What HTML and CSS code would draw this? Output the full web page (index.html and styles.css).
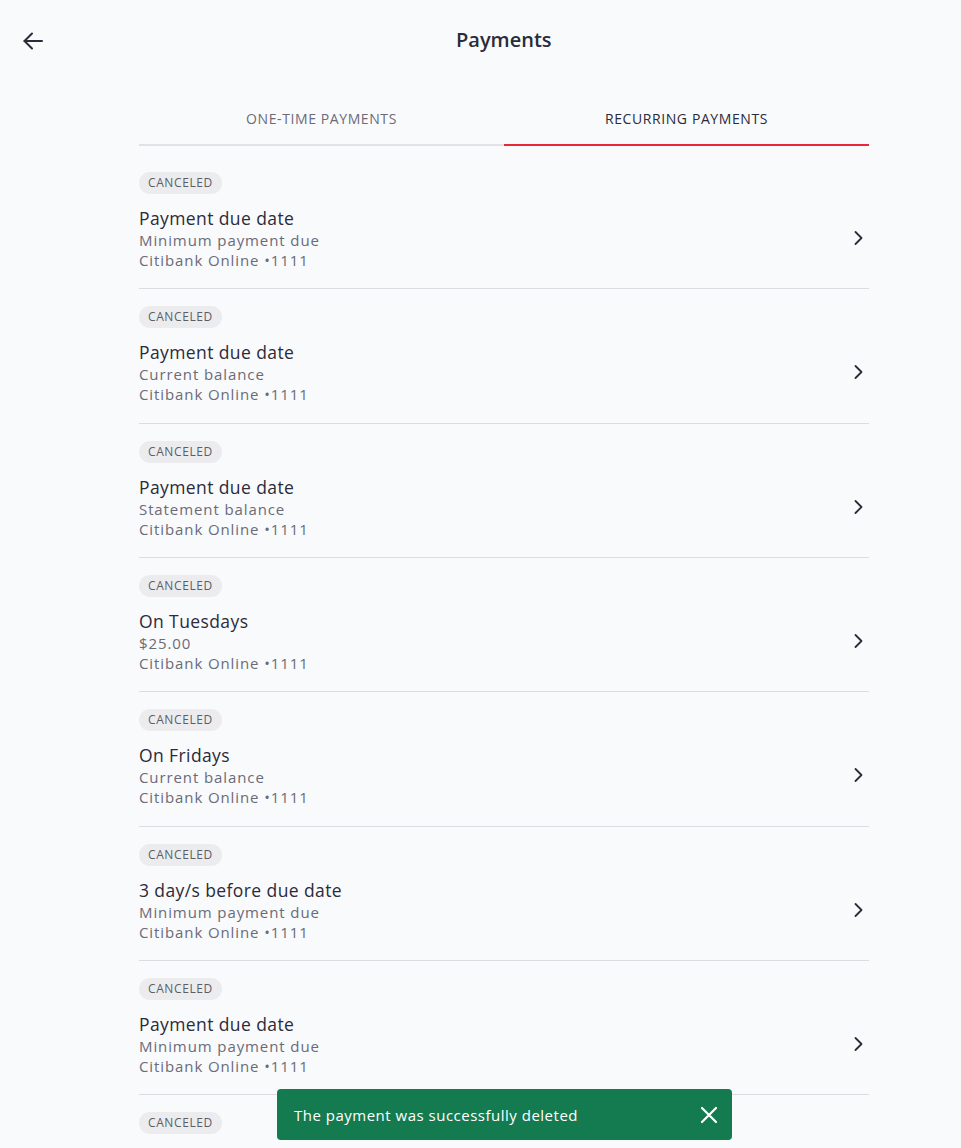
FILE: index.html
```html
<!DOCTYPE html>
<html>
<head>
  <title>Payments</title>
  <link rel="stylesheet" href="styles.css">
</head>
<body>
  <!-- Header -->
  <header class="topbar">
    <a class="back" href="#">
      <svg width="24" height="24" viewBox="0 0 24 24" fill="none" stroke="#2b2b3a" stroke-width="2" stroke-linecap="round" stroke-linejoin="round">
        <path d="M21 12H3.5"/>
        <path d="M11 4.5L3.5 12l7.5 7.5"/>
      </svg>
    </a>
    <h1 class="title">Payments</h1>
  </header>

  <main class="content">
    <!-- Tabs -->
    <div class="tabs">
      <div class="tab">ONE-TIME PAYMENTS</div>
      <div class="tab active">RECURRING PAYMENTS</div>
    </div>

    <!-- List -->
    <div class="list" id="list"></div>
  </main>

  <!-- Toast -->
  <div class="toast">
    <span>The payment was successfully deleted</span>
    <svg class="toast-close" width="18" height="18" viewBox="0 0 18 18" stroke="#fff" stroke-width="2.2" stroke-linecap="round">
      <path d="M2 2l14 14M16 2L2 16"/>
    </svg>
  </div>

  <script>
    const payments = [
      { title: "Payment due date", amount: "Minimum payment due" },
      { title: "Payment due date", amount: "Current balance" },
      { title: "Payment due date", amount: "Statement balance" },
      { title: "On Tuesdays", amount: "$25.00" },
      { title: "On Fridays", amount: "Current balance" },
      { title: "3 day/s before due date", amount: "Minimum payment due" },
      { title: "Payment due date", amount: "Minimum payment due" }
    ];

    const chevron = `
      <svg class="chevron" width="10" height="16" viewBox="0 0 10 16" fill="none" stroke="#2b2b3a" stroke-width="1.8" stroke-linecap="round" stroke-linejoin="round">
        <path d="M2.5 2l6 6-6 6"/>
      </svg>`;

    const list = document.getElementById("list");
    for (const p of payments) {
      const row = document.createElement("div");
      row.className = "item";
      row.innerHTML = `
        <div class="item-body">
          <span class="badge">CANCELED</span>
          <div class="item-title">${p.title}</div>
          <div class="item-sub">${p.amount}</div>
          <div class="item-sub">Citibank Online •1111</div>
        </div>
        ${chevron}
      `;
      list.appendChild(row);
    }

    // last row is only peeking in under the toast
    const last = document.createElement("div");
    last.className = "item item-peek";
    last.innerHTML = `<div class="item-body"><span class="badge">CANCELED</span></div>`;
    list.appendChild(last);
  </script>
</body>
</html>
```

FILE: styles.css
```css
/* General */
body {
    margin: 0;
    font-family: "Open Sans", Arial, sans-serif;
    background-color: #f9fafc;
    color: #2b2b3a;
    height: 1148px;
    overflow: hidden;
}

/* Header */
.topbar {
    display: flex;
    align-items: center;
    height: 80px;
}

.back {
    display: flex;
    margin-left: 21px;
    margin-top: 1px;
}

.title {
    margin: 0 0 0 411px;
    font-size: 20px;
    font-weight: 600;
    color: #2b2b3a;
    position: relative;
    top: -1px;
}

/* Content column */
.content {
    width: 730px;
    margin-left: 139px;
}

/* Tabs */
.tabs {
    display: flex;
    margin-top: 12px;
}

.tab {
    flex: 1;
    text-align: center;
    font-size: 14px;
    letter-spacing: 0.6px;
    color: #6b6b78;
    padding: 17px 0 15px;
    line-height: 20px;
    border-bottom: 2px solid #e2e2e6;
}

.tab.active {
    color: #2b2b3a;
    border-bottom: 2px solid #e8283a;
}

/* List */
.list {
    padding-top: 9px;
}

.item {
    display: flex;
    align-items: flex-start;
    padding: 17px 0 18.35px;
    border-bottom: 1px solid #dcdce0;
}

.item-peek {
    border-bottom: none;
}

.item-body {
    flex: 1;
    display: flex;
    flex-direction: column;
    align-items: flex-start;
}

.badge {
    height: 22px;
    line-height: 22px;
    padding: 0 9px;
    border-radius: 11px;
    background-color: #ececef;
    color: #5d5d68;
    font-size: 12px;
    font-weight: 500;
    letter-spacing: 0.6px;
}

.item-title {
    margin-top: 12px;
    font-size: 17.5px;
    letter-spacing: 0.4px;
    line-height: 24px;
    color: #2b2b3a;
}

.item-sub {
    font-size: 15px;
    letter-spacing: 0.9px;
    line-height: 20px;
    color: #6b6b78;
}

.chevron {
    margin-right: 6px;
    margin-top: 58px;
}

/* Toast */
.toast {
    position: fixed;
    left: 277px;
    top: 1089px;
    width: 455px;
    height: 51px;
    box-sizing: border-box;
    padding: 0 14px 0 17px;
    display: flex;
    align-items: center;
    justify-content: space-between;
    background-color: #147a50;
    border-radius: 4px;
    color: #fff;
    font-size: 15px;
    font-weight: 500;
    letter-spacing: 0.5px;
}
```
